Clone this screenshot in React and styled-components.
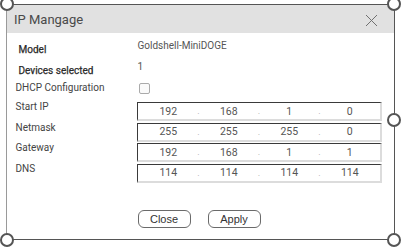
import React from "react";
import styled, { createGlobalStyle } from "styled-components";

const GlobalStyle = createGlobalStyle`
  html, body {
    margin: 0;
    padding: 0;
    background: #fff;
  }
  body {
    font-family: Roboto, "Liberation Sans", Arial, sans-serif;
    color: #444;
  }
`;

const ipRows = [
  { label: "Start IP", parts: ["192", "168", "1", "0"] },
  { label: "Netmask", parts: ["255", "255", "255", "0"] },
  { label: "Gateway", parts: ["192", "168", "1", "1"] },
  { label: "DNS", parts: ["114", "114", "114", "114"] },
];

const handles = [
  { x: "left", y: "top" },
  { x: "right", y: "top" },
  { x: "right", y: "middle" },
  { x: "left", y: "bottom" },
  { x: "right", y: "bottom" },
];

export default function App() {
  return (
    <>
      <GlobalStyle />
      <Stage>
        <Frame>
          <Header>
            <Title>IP Mangage</Title>
            <CloseButton aria-label="close">
              <svg width="13" height="13" viewBox="0 0 13 13">
                <path
                  d="M1 1 L12 12 M12 1 L1 12"
                  stroke="#707070"
                  strokeWidth="1"
                  fill="none"
                />
              </svg>
            </CloseButton>
          </Header>

          <Body>
            <InfoRow>
              <Label $strong $indent>Model</Label>
              <Value>Goldshell-MiniDOGE</Value>
            </InfoRow>
            <InfoRow>
              <Label $strong $indent>Devices selected</Label>
              <Value>1</Value>
            </InfoRow>
            <InfoRow>
              <Label>DHCP Configuration</Label>
              <Checkbox />
            </InfoRow>

            <IpList>
              {ipRows.map((row) => (
                <IpRow key={row.label}>
                  <IpLabel>{row.label}</IpLabel>
                  <IpBox>
                    {row.parts.map((p, i) => (
                      <React.Fragment key={i}>
                        {i > 0 && <Dot>.</Dot>}
                        <Segment>{p}</Segment>
                      </React.Fragment>
                    ))}
                  </IpBox>
                </IpRow>
              ))}
            </IpList>

            <Actions>
              <Button>Close</Button>
              <Button>Apply</Button>
            </Actions>
          </Body>

          {handles.map((h, i) => (
            <Handle key={i} $x={h.x} $y={h.y} />
          ))}
        </Frame>
      </Stage>
    </>
  );
}

const Stage = styled.div`
  width: 401px;
  height: 247px;
  padding: 4px 0 0 6px;
  box-sizing: border-box;
`;

const Frame = styled.div`
  position: relative;
  width: 389px;
  height: 236px;
  box-sizing: border-box;
  border: 1.5px solid #555;
  border-left-color: #9a9a9a;
  background: #fff;
`;

const Header = styled.div`
  height: 28px;
  background: #e1e1e1;
  display: flex;
  align-items: center;
  justify-content: space-between;
  padding: 0 16px 0 7px;
`;

const Title = styled.span`
  font-size: 13px;
  color: #4a4a4a;
`;

const CloseButton = styled.span`
  display: flex;
  width: 13px;
  height: 13px;
  margin-top: 2px;
`;

const Body = styled.div`
  padding: 6px 10px 0 8.5px;
`;

const InfoRow = styled.div`
  display: grid;
  grid-template-columns: 122px 1fr;
  height: 21px;
  align-items: start;
`;

const Label = styled.span`
  font-size: 10px;
  line-height: 14px;
  color: ${(p) => (p.$strong ? "#2a2a2a" : "#444")};
  font-weight: 400;
  -webkit-text-stroke: ${(p) => (p.$strong ? "0.25px #2a2a2a" : "0")};
  padding-left: ${(p) => (p.$indent ? "3px" : "0")};
  margin-top: ${(p) => (p.$indent ? "4px" : "0")};
`;

const Value = styled.span`
  font-size: 10px;
  line-height: 14px;
  color: #555;
`;

const Checkbox = styled.span`
  display: block;
  width: 9px;
  height: 9px;
  margin: 2px 0 0 1px;
  border: 1px solid #aaa;
  border-radius: 2px;
  background: #fafafa;
`;

const IpList = styled.div`
  display: flex;
  flex-direction: column;
  gap: 1.5px;
`;

const IpRow = styled.div`
  display: grid;
  grid-template-columns: 121.5px 245px;
  align-items: start;
`;

const IpLabel = styled.span`
  font-size: 10px;
  line-height: 10px;
  color: #444;
`;

const IpBox = styled.div`
  height: 19px;
  box-sizing: border-box;
  display: flex;
  align-items: center;
  border-style: solid;
  border-width: 1.5px 2px 2px 1.5px;
  border-color: #3a3a3a #dcdcdc #dcdcdc #3a3a3a;
  background: #fff;
`;

const Segment = styled.span`
  flex: 1;
  text-align: center;
  font-size: 10.5px;
  color: #555;
`;

const Dot = styled.span`
  width: 0;
  display: flex;
  justify-content: center;
  font-size: 9px;
  color: #aaa;
  overflow: visible;
`;

const Actions = styled.div`
  display: flex;
  gap: 17px;
  padding: 27.5px 0 0 122px;
`;

const Button = styled.button`
  width: 53px;
  height: 18px;
  padding: 0;
  box-sizing: border-box;
  border: 1.5px solid #6a6a6a;
  border-radius: 6px;
  background: #fff;
  font-family: "Liberation Sans", Arial, sans-serif;
  font-size: 11px;
  color: #333;
`;

const Handle = styled.span`
  position: absolute;
  width: 10px;
  height: 10px;
  border: 2px solid #555;
  border-radius: 50%;
  background: #fff;
  left: ${(p) => (p.$x === "left" ? "-7px" : "auto")};
  right: ${(p) => (p.$x === "right" ? "-7px" : "auto")};
  top: ${(p) =>
    p.$y === "top" ? "-8px" : p.$y === "middle" ? "108px" : "auto"};
  bottom: ${(p) => (p.$y === "bottom" ? "-8px" : "auto")};
`;
